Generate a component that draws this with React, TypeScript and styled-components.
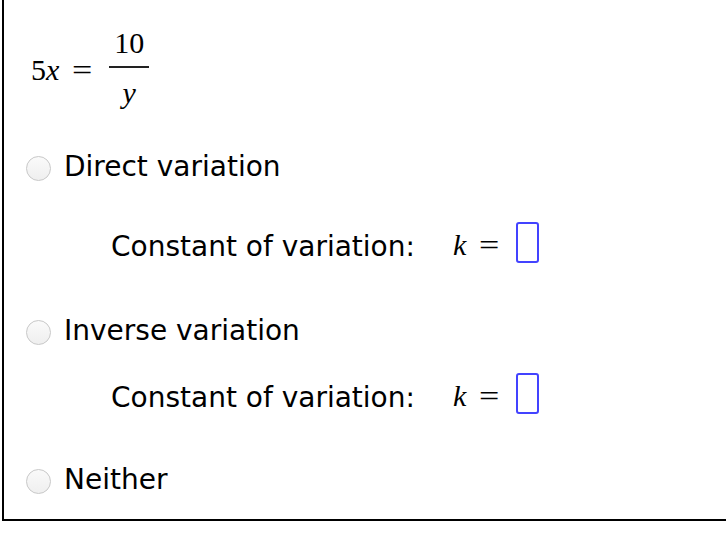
import React from "react";
import styled, { createGlobalStyle } from "styled-components";

const GlobalStyle = createGlobalStyle`
  html, body {
    margin: 0;
    padding: 0;
    background: #fff;
  }
  body {
    font-family: "DejaVu Sans", Verdana, sans-serif;
    color: #000;
    overflow: hidden;
  }
`;

const Panel = styled.div`
  box-sizing: border-box;
  height: 521px;
  margin-left: 2px;
  padding: 28px 0 0 22px;
  border-left: 2px solid #000;
  border-bottom: 2px solid #000;
  display: flex;
  flex-direction: column;
`;

const Equation = styled.div`
  display: flex;
  align-items: flex-start;
  margin-left: 5px;
  font-family: "Liberation Serif", "Times New Roman", serif;
  font-size: 30px;
  line-height: 30px;
`;

const Lhs = styled.span`
  margin-top: 27px;
  display: flex;
`;

const Var = styled.i`
  font-style: italic;
`;

const Equals = styled.span<{ $before: number }>`
  display: inline-block;
  margin-left: ${(p) => p.$before}px;
  transform: scaleX(1.2);
  transform-origin: left center;
`;

const Fraction = styled.span`
  display: inline-flex;
  flex-direction: column;
  align-items: center;
  width: 40px;
  margin-left: 20px;
`;

const Bar = styled.span`
  align-self: stretch;
  height: 2px;
  background: #222;
  margin: 8px 0 10px;
`;

const Choice = styled.label<{ $top: number }>`
  display: flex;
  align-items: flex-start;
  gap: 13px;
  margin-top: ${(p) => p.$top}px;
  font-size: 28px;
  line-height: 32px;
`;

const Radio = styled.span`
  flex: none;
  width: 25px;
  height: 25px;
  box-sizing: border-box;
  margin-top: 5px;
  border-radius: 50%;
  border: 1.5px solid #c8c8c8;
  background: linear-gradient(#fafafa, #efefef);
`;

const ConstantRow = styled.div<{ $top: number }>`
  display: flex;
  align-items: flex-start;
  margin-top: ${(p) => p.$top}px;
  margin-left: 85px;
  font-size: 28px;
  line-height: 32px;
`;

const Label = styled.span`
  margin-top: 9px;
  white-space: pre;
`;

const InlineMath = styled.span`
  display: flex;
  margin-top: 7px;
  margin-left: 38px;
  font-family: "Liberation Serif", "Times New Roman", serif;
  font-size: 30px;
`;

const AnswerBox = styled.span`
  box-sizing: border-box;
  width: 23px;
  height: 41px;
  margin-left: 20px;
  border: 2px solid #4343ff;
  border-radius: 3px;
  background: #fff;
`;

const Constant = ({ top }: { top: number }) => (
  <ConstantRow $top={top}>
    <Label>Constant of variation:</Label>
    <InlineMath>
      <Var>k</Var>
      <Equals $before={13}>=</Equals>
    </InlineMath>
    <AnswerBox />
  </ConstantRow>
);

const App = () => (
  <>
    <GlobalStyle />
    <Panel>
      <Equation>
        <Lhs>
          5<Var>x</Var>
          <Equals $before={13}>=</Equals>
        </Lhs>
        <Fraction>
          <span>10</span>
          <Bar />
          <Var>y</Var>
        </Fraction>
      </Equation>

      <Choice $top={43}>
        <Radio />
        Direct variation
      </Choice>
      <Constant top={39} />

      <Choice $top={52}>
        <Radio />
        Inverse variation
      </Choice>
      <Constant top={26} />

      <Choice $top={50}>
        <Radio />
        Neither
      </Choice>
    </Panel>
  </>
);

export default App;
